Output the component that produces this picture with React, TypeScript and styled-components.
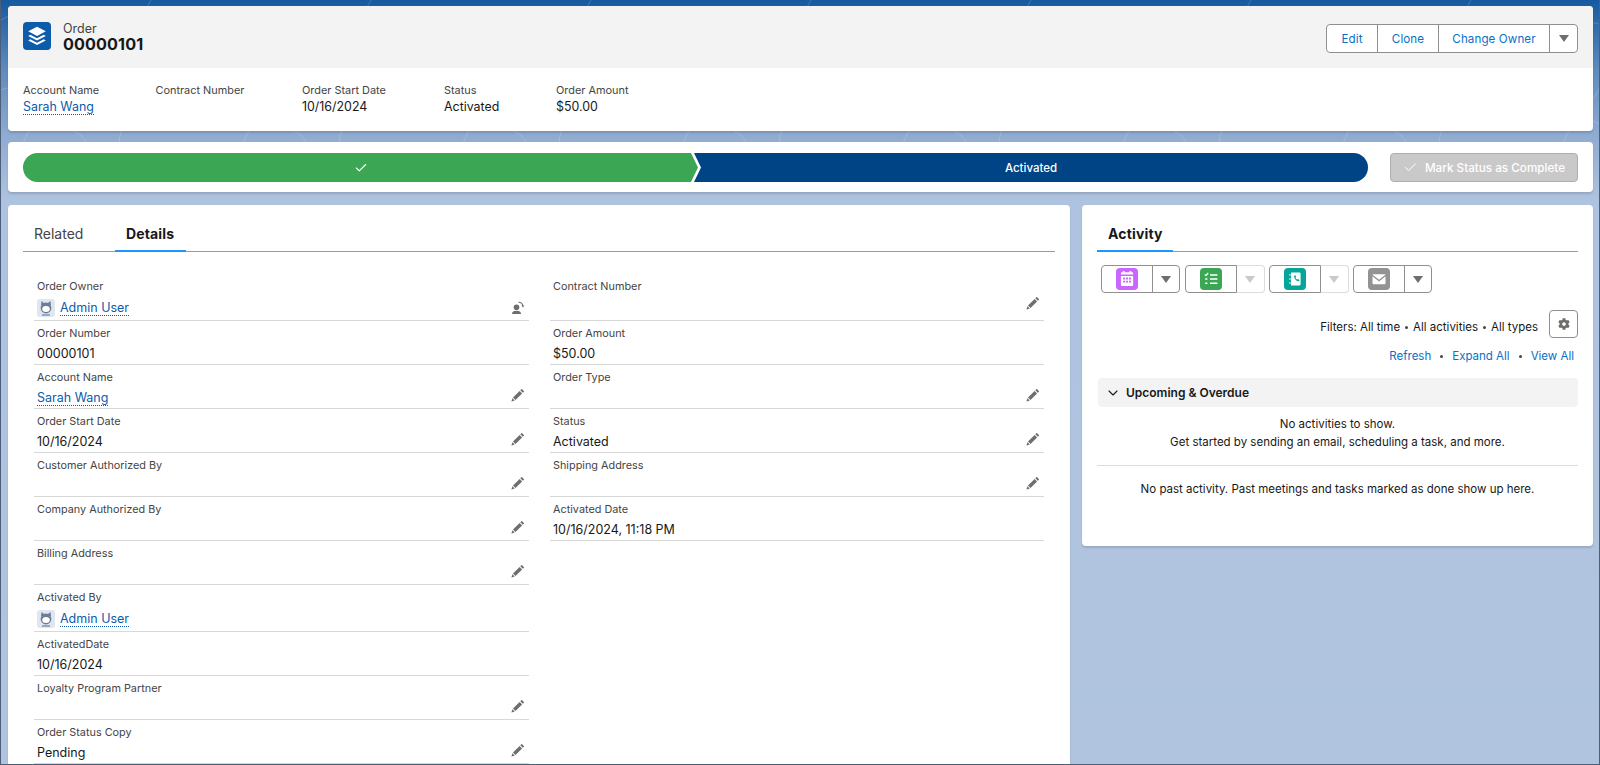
import React from "react";
import styled, { createGlobalStyle } from "styled-components";
import { Check, ChevronDown } from "lucide-react";
import { FaCog } from "react-icons/fa";

const contour = `<svg xmlns='http://www.w3.org/2000/svg' width='220' height='150' fill='none' stroke='white' stroke-opacity='.16' stroke-width='1'><path d='M0 20c30-18 50 14 80 2s40-20 70-6 40 10 70-4'/><path d='M20 150c10-40 50-50 40-90s40-40 60-30'/><path d='M120 150c-10-30 30-40 50-60s10-50 50-60'/><path d='M0 90c20-10 30 20 50 30s30 10 40 30'/><path d='M150 0c-10 20-30 30-20 50s30 20 40 40'/></svg>`;

const GlobalStyle = createGlobalStyle`
  html, body {
    margin: 0;
    padding: 0;
  }
  body {
    font-family: "Inter", "Liberation Sans", sans-serif;
    color: #181818;
    -webkit-font-smoothing: antialiased;
  }
`;

const Page = styled.div`
  box-sizing: border-box;
  width: 1600px;
  height: 765px;
  overflow: hidden;
  padding: 6px 6px 0 7px;
  display: flex;
  flex-direction: column;
  gap: 11px;
  border-left: 1px solid #4d5f78;
  border-right: 1px solid #4d5f78;
  border-bottom: 1px solid #4d5f78;
  background:
    url("data:image/svg+xml,${encodeURIComponent(contour)}") top left / 220px 150px repeat-x,
    linear-gradient(180deg, #17599f 0, #5f8bbd 70px, #8fabd0 135px, #aec3df 200px, #b0c4df 100%);
`;

const Card = styled.section`
  background: #fff;
  border-radius: 4px;
  box-shadow: 0 2px 2px rgba(24, 24, 24, 0.14);
`;

const HeaderCard = styled(Card)`
  height: 125px;
  flex: none;
  overflow: hidden;
`;

const HeaderTop = styled.div`
  height: 62px;
  box-sizing: border-box;
  padding: 16px 15px 0;
  background: #f3f3f3;
  display: flex;
  justify-content: space-between;
  align-items: flex-start;
`;

const TitleBlock = styled.div`
  display: flex;
  gap: 12px;
`;

const ObjectIcon = styled.div`
  width: 28px;
  height: 28px;
  border-radius: 4px;
  background: #0b5cab;
  display: flex;
  align-items: center;
  justify-content: center;
`;

const TitleText = styled.div`
  display: flex;
  flex-direction: column;
`;

const ObjectName = styled.div`
  font-size: 12.5px;
  line-height: 14px;
  color: #444;
`;

const RecordName = styled.div`
  font-size: 16.2px;
  line-height: 16px;
  font-weight: 700;
  letter-spacing: 0.1px;
`;

const ButtonGroup = styled.div`
  display: flex;
  height: 29px;
  margin-top: 2px;
  background: #fff;
  border: 1px solid #8f8f8f;
  border-radius: 4px;
  box-sizing: border-box;
`;

const GroupButton = styled.button<{ $w: number }>`
  width: ${({ $w }) => $w}px;
  padding: 0;
  background: none;
  border: none;
  border-left: 1px solid #8f8f8f;
  color: #0b6fc7;
  font: 400 11.6px "Inter", sans-serif;
  letter-spacing: 0.1px;
  display: flex;
  align-items: center;
  justify-content: center;
  &:first-child {
    border-left: none;
  }
`;

const Caret = styled.span<{ $light?: boolean }>`
  display: block;
  width: 0;
  height: 0;
  border-left: 5.5px solid transparent;
  border-right: 5.5px solid transparent;
  border-top: 7px solid ${({ $light }) => ($light ? "#c9c9c9" : "#706e6b")};
`;

const Highlights = styled.div`
  display: flex;
  padding: 13px 15px 0;
`;

const Highlight = styled.div<{ $w: number }>`
  width: ${({ $w }) => $w}px;
`;

const HighlightLabel = styled.div`
  font-size: 10.9px;
  line-height: 18px;
  color: #444;
`;

const HighlightValue = styled.div`
  font-size: 12.4px;
  line-height: 16px;
`;

const RecordLink = styled.a`
  color: #0b5cab;
  border-bottom: 1px dotted #0b5cab;
  text-decoration: none;
`;

const PathCard = styled(Card)`
  height: 50px;
  flex: none;
  box-sizing: border-box;
  padding: 11px 15px 0;
  display: flex;
  justify-content: space-between;
`;

const PathBar = styled.div`
  display: flex;
  width: 1345px;
  height: 29px;
`;

const PathDone = styled.div`
  width: 675px;
  margin-right: -7px;
  background: #3ba755;
  border-radius: 15px 0 0 15px;
  clip-path: polygon(0 0, 668px 0, 100% 50%, 668px 100%, 0 100%);
  color: #fff;
  display: flex;
  align-items: center;
  justify-content: center;
`;

const PathCurrent = styled.div`
  flex: 1;
  background: #014486;
  border-radius: 0 15px 15px 0;
  clip-path: polygon(0 0, 100% 0, 100% 100%, 0 100%, 7px 50%);
  margin-left: 3px;
  color: #fff;
  font-size: 11.5px;
  font-weight: 500;
  display: flex;
  align-items: center;
  justify-content: center;
`;

const CompleteButton = styled.button`
  width: 188px;
  height: 29px;
  padding: 0;
  background: #c9c9c9;
  border: 1px solid #aeaeae;
  border-radius: 4px;
  color: #fff;
  font: 500 11.7px "Inter", sans-serif;
  display: flex;
  align-items: center;
  justify-content: center;
  gap: 7px;
`;

const Columns = styled.div`
  flex: 1;
  min-height: 0;
  margin-top: 2px;
  display: grid;
  grid-template-columns: 1062px 511px;
  gap: 12px;
  align-items: start;
`;

const DetailCard = styled(Card)`
  height: 600px;
  box-sizing: border-box;
  padding: 0 15px;
`;

const ActivityCard = styled(Card)`
  height: 341px;
  box-sizing: border-box;
  padding: 0 15px;
`;

const Tabs = styled.div`
  height: 47px;
  box-sizing: border-box;
  display: flex;
  align-items: flex-end;
  border-bottom: 1px solid #9a9a9a;
`;

const Tab = styled.div<{ $active?: boolean; $w: number }>`
  width: ${({ $w }) => $w}px;
  box-sizing: border-box;
  height: 37px;
  margin-bottom: -1px;
  padding-left: 11px;
  font-size: 14px;
  line-height: 37px;
  font-weight: ${({ $active }) => ($active ? 700 : 400)};
  letter-spacing: ${({ $active }) => ($active ? "0.15px" : "0")};
  color: ${({ $active }) => ($active ? "#181818" : "#444")};
  border-bottom: 2px solid ${({ $active }) => ($active ? "#1b96ff" : "transparent")};
`;

const FieldGrid = styled.div`
  display: grid;
  grid-template-columns: 495px 494px;
  gap: 21px;
  padding: 22px 0 0 10.5px;
`;

const FieldColumn = styled.div`
  display: flex;
  flex-direction: column;
`;

const FieldRow = styled.div<{ $tall?: boolean }>`
  box-sizing: border-box;
  height: ${({ $tall }) => ($tall ? 47 : 44)}px;
  padding: 3px 4px 0 3.5px;
  border-bottom: 1px solid #d8d8d8;
`;

const FieldLabel = styled.div`
  font-size: 10.85px;
  line-height: 18px;
  color: #444;
`;

const FieldValue = styled.div<{ $tall?: boolean }>`
  height: ${({ $tall }) => ($tall ? 26 : 23)}px;
  display: flex;
  align-items: center;
  justify-content: space-between;
  font-size: 12.5px;
`;

const UserCell = styled.span`
  display: flex;
  align-items: center;
  gap: 5px;
`;

const RowAction = styled.span<{ $lift: number }>`
  display: flex;
  margin-top: ${({ $lift }) => $lift}px;
`;

const Avatar = styled.svg`
  width: 18px;
  height: 18px;
  border-radius: 3px;
`;

const ActionRow = styled.div`
  display: flex;
  gap: 4px;
  padding: 13px 0 0 3.5px;
`;

const ActionGroup = styled.div`
  display: flex;
  width: 80px;
  height: 28px;
`;

const ActionMain = styled.div`
  width: 52px;
  box-sizing: border-box;
  border: 1px solid #8f8f8f;
  border-radius: 4px 0 0 4px;
  display: flex;
  align-items: center;
  justify-content: center;
`;

const ActionCaret = styled.div<{ $disabled?: boolean }>`
  width: 28px;
  box-sizing: border-box;
  border: 1px solid ${({ $disabled }) => ($disabled ? "#dcdcdc" : "#8f8f8f")};
  border-left: ${({ $disabled }) => ($disabled ? "none" : "1px solid #8f8f8f")};
  margin-left: ${({ $disabled }) => ($disabled ? 0 : -1)}px;
  border-radius: 0 4px 4px 0;
  display: flex;
  align-items: center;
  justify-content: center;
`;

const ActionTile = styled.svg`
  width: 22px;
  height: 22px;
  border-radius: 4px;
`;

const FilterRow = styled.div`
  display: flex;
  justify-content: flex-end;
  align-items: center;
  gap: 11px;
  margin-top: 17px;
  font-size: 11.5px;
`;

const FilterText = styled.span`
  display: flex;
  align-items: center;
  gap: 5px;
  margin-top: 6px;
`;

const FilterDot = styled.span`
  width: 3px;
  height: 3px;
  border-radius: 50%;
  background: #444;
`;

const SettingsButton = styled.div`
  width: 29px;
  height: 28px;
  box-sizing: border-box;
  border: 1px solid #8f8f8f;
  border-radius: 4px;
  display: flex;
  align-items: center;
  justify-content: center;
  color: #706e6b;
`;

const LinkRow = styled.div`
  display: flex;
  justify-content: flex-end;
  align-items: center;
  gap: 7.5px;
  height: 18px;
  margin-top: 9px;
  padding-right: 4px;
  font-size: 11.5px;
`;

const ActionLink = styled.a`
  color: #0b6fc7;
`;

const Dot = styled.span`
  width: 3px;
  height: 3px;
  margin: 0 1.5px;
  border-radius: 50%;
  background: #444;
`;

const SectionBar = styled.div`
  height: 29px;
  margin: 13px 0 0 1px;
  padding-left: 7px;
  border-radius: 4px;
  background: #f3f3f3;
  display: flex;
  align-items: center;
  gap: 5px;
  font-size: 12px;
  font-weight: 600;
`;

const EmptyNote = styled.div`
  padding-top: 8px;
  text-align: center;
  font-size: 11.5px;
  line-height: 18px;
`;

const Divider = styled.div`
  height: 1px;
  margin-top: 14px;
  background: #dcdcdc;
`;

const PastNote = styled.div`
  padding-top: 14px;
  text-align: center;
  font-size: 11.5px;
  line-height: 18px;
`;

const Pencil = () => (
  <svg width="14" height="14" viewBox="0 0 14 14" fill="#706e6b">
    <path d="M10.3 1.2a.6.6 0 0 1 .85 0l1.7 1.7a.6.6 0 0 1 0 .85l-1 1-2.55-2.55zM8.6 2.9l2.5 2.5-6.6 6.6-2.5-2.5zM1.4 10.2l2.4 2.4-3.1.8a.2.2 0 0 1-.2-.2z" />
  </svg>
);

const ChangeOwner = () => (
  <svg width="14" height="14" viewBox="0 0 14 14" fill="#706e6b">
    <circle cx="5.5" cy="6.2" r="2.8" />
    <path d="M1 13c0-2.2 1.6-3.2 4.5-3.2S10 10.8 10 13z" />
    <path d="M7.5 1.2A4.6 4.6 0 0 1 12 5" fill="none" stroke="#706e6b" strokeWidth="1.1" />
    <path d="M10.4 4.6h3L11.9 6.6z" />
  </svg>
);

const UserAvatar = () => (
  <Avatar viewBox="0 0 18 18">
    <rect width="18" height="18" fill="#dfe6ef" />
    <path d="M4 6l.6-4 2.4 2h4l2.4-2 .6 4z" fill="#6f7d94" />
    <circle cx="9" cy="9" r="5.4" fill="#6f7d94" />
    <ellipse cx="9" cy="10" rx="3.8" ry="3" fill="#fff" />
    <path d="M5 15h8v2H5z" fill="#9aa8bc" />
  </Avatar>
);

const StackIcon = () => (
  <svg width="22" height="22" viewBox="0 0 20 20" fill="#fff">
    <path d="M10 1.5l8 4.2-8 4.2-8-4.2z" />
    <path d="M3.9 8.9L10 12l6.1-3.1 1.9 1-8 4.2-8-4.2z" />
    <path d="M3.9 13L10 16.1l6.1-3.1 1.9 1-8 4.2-8-4.2z" />
  </svg>
);

const EventTile = () => (
  <ActionTile viewBox="0 0 22 22">
    <rect width="22" height="22" fill="#cb65ff" />
    <g transform="translate(-2.4 -2.6) scale(1.22)">
      <path d="M6 7.5V6.6c0-.6.4-1 1-1h.6V4.6h1.3v1h4.2v-1h1.3v1h.6c.6 0 1 .4 1 1v.9z" fill="#fff" />
      <path d="M6 8.6h10v7.2c0 .6-.4 1-1 1H7c-.6 0-1-.4-1-1z" fill="#fff" />
      <path d="M7.8 10h1.6v1.5H7.8zm2.4 0h1.6v1.5h-1.6zm2.4 0h1.6v1.5h-1.6zm-4.8 2.6h1.6v1.5H7.8zm2.4 0h1.6v1.5h-1.6zm2.4 0h1.6v1.5h-1.6z" fill="#cb65ff" />
    </g>
  </ActionTile>
);

const TaskTile = () => (
  <ActionTile viewBox="0 0 22 22">
    <rect width="22" height="22" fill="#3ba755" />
    <path d="M4.8 6.4l1.2 1.2 2.2-2.6" fill="none" stroke="#fff" strokeWidth="1.2" />
    <path d="M10 6.2h7.4v1.5H10zM10 10.3h7.4v1.5H10zM10 14.4h7.4v1.5H10zM5.2 10.3h2.2v1.5H5.2zM5.2 14.4h2.2v1.5H5.2z" fill="#fff" />
  </ActionTile>
);

const CallTile = () => (
  <ActionTile viewBox="0 0 22 22">
    <rect width="22" height="22" fill="#06a59a" />
    <path d="M7 4.5h8.4c.7 0 1.2.5 1.2 1.2v10.6c0 .7-.5 1.2-1.2 1.2H7z" fill="#fff" />
    <path d="M5 7h1.8M5 11h1.8M5 15h1.8" stroke="#fff" strokeWidth="1.2" />
    <path d="M10.2 7.6l1.2-.4.8 1.8-.8.7c.3.8.9 1.5 1.7 1.9l.8-.7 1.6 1-.5 1.3c-2.7.3-5.3-2.7-4.8-5.6z" fill="#06a59a" />
  </ActionTile>
);

const MailTile = () => (
  <ActionTile viewBox="0 0 22 22">
    <rect width="22" height="22" fill="#939393" />
    <path d="M5 6.2h12c.4 0 .6.3.4.6L11 11.8 4.6 6.8c-.2-.3 0-.6.4-.6z" fill="#fff" />
    <path d="M4.5 8.3L11 13.4l6.5-5.1v7c0 .5-.4.9-.9.9H5.4c-.5 0-.9-.4-.9-.9z" fill="#fff" />
  </ActionTile>
);

interface Field {
  label: string;
  value?: string;
  link?: boolean;
  user?: boolean;
  action?: "edit" | "owner";
}

const leftFields: Field[] = [
  { label: "Order Owner", value: "Admin User", user: true, action: "owner" },
  { label: "Order Number", value: "00000101" },
  { label: "Account Name", value: "Sarah Wang", link: true, action: "edit" },
  { label: "Order Start Date", value: "10/16/2024", action: "edit" },
  { label: "Customer Authorized By", action: "edit" },
  { label: "Company Authorized By", action: "edit" },
  { label: "Billing Address", action: "edit" },
  { label: "Activated By", value: "Admin User", user: true },
  { label: "ActivatedDate", value: "10/16/2024" },
  { label: "Loyalty Program Partner", action: "edit" },
  { label: "Order Status Copy", value: "Pending", action: "edit" },
];

const rightFields: Field[] = [
  { label: "Contract Number", user: true, action: "edit" },
  { label: "Order Amount", value: "$50.00" },
  { label: "Order Type", action: "edit" },
  { label: "Status", value: "Activated", action: "edit" },
  { label: "Shipping Address", action: "edit" },
  { label: "Activated Date", value: "10/16/2024, 11:18 PM" },
];

const highlights = [
  { label: "Account Name", value: "Sarah Wang", link: true, width: 132.5 },
  { label: "Contract Number", value: "", width: 146.5 },
  { label: "Order Start Date", value: "10/16/2024", width: 142 },
  { label: "Status", value: "Activated", width: 112 },
  { label: "Order Amount", value: "$50.00", width: 100 },
];

function FieldItem({ field }: { field: Field }) {
  const lift = field.action === "owner" ? 0 : field.user ? -11 : -5;
  return (
    <FieldRow $tall={field.user}>
      <FieldLabel>{field.label}</FieldLabel>
      <FieldValue $tall={field.user}>
        {field.user && field.value ? (
          <UserCell>
            <UserAvatar />
            <RecordLink>{field.value}</RecordLink>
          </UserCell>
        ) : field.link ? (
          <RecordLink>{field.value}</RecordLink>
        ) : (
          <span>{field.value}</span>
        )}
        {field.action && (
          <RowAction $lift={lift}>{field.action === "edit" ? <Pencil /> : <ChangeOwner />}</RowAction>
        )}
      </FieldValue>
    </FieldRow>
  );
}

export default function App() {
  return (
    <Page>
      <GlobalStyle />
      <HeaderCard>
        <HeaderTop>
          <TitleBlock>
            <ObjectIcon>
              <StackIcon />
            </ObjectIcon>
            <TitleText>
              <ObjectName>Order</ObjectName>
              <RecordName>00000101</RecordName>
            </TitleText>
          </TitleBlock>
          <ButtonGroup>
            <GroupButton $w={50}>Edit</GroupButton>
            <GroupButton $w={61}>Clone</GroupButton>
            <GroupButton $w={111}>Change Owner</GroupButton>
            <GroupButton $w={28}>
              <Caret />
            </GroupButton>
          </ButtonGroup>
        </HeaderTop>
        <Highlights>
          {highlights.map((h) => (
            <Highlight key={h.label} $w={h.width}>
              <HighlightLabel>{h.label}</HighlightLabel>
              <HighlightValue>
                {h.link ? <RecordLink>{h.value}</RecordLink> : h.value}
              </HighlightValue>
            </Highlight>
          ))}
        </Highlights>
      </HeaderCard>

      <PathCard>
        <PathBar>
          <PathDone>
            <Check size={14} strokeWidth={2} />
          </PathDone>
          <PathCurrent>Activated</PathCurrent>
        </PathBar>
        <CompleteButton>
          <Check size={15} strokeWidth={1.6} />
          Mark Status as Complete
        </CompleteButton>
      </PathCard>

      <Columns>
        <DetailCard>
          <Tabs>
            <Tab $w={92}>Related</Tab>
            <Tab $active $w={71}>
              Details
            </Tab>
          </Tabs>
          <FieldGrid>
            <FieldColumn>
              {leftFields.map((f) => (
                <FieldItem key={f.label} field={f} />
              ))}
            </FieldColumn>
            <FieldColumn>
              {rightFields.map((f) => (
                <FieldItem key={f.label} field={f} />
              ))}
            </FieldColumn>
          </FieldGrid>
        </DetailCard>

        <ActivityCard>
          <Tabs>
            <Tab $active $w={76}>
              Activity
            </Tab>
          </Tabs>
          <ActionRow>
            <ActionGroup>
              <ActionMain>
                <EventTile />
              </ActionMain>
              <ActionCaret>
                <Caret />
              </ActionCaret>
            </ActionGroup>
            <ActionGroup>
              <ActionMain>
                <TaskTile />
              </ActionMain>
              <ActionCaret $disabled>
                <Caret $light />
              </ActionCaret>
            </ActionGroup>
            <ActionGroup>
              <ActionMain>
                <CallTile />
              </ActionMain>
              <ActionCaret $disabled>
                <Caret $light />
              </ActionCaret>
            </ActionGroup>
            <ActionGroup>
              <ActionMain>
                <MailTile />
              </ActionMain>
              <ActionCaret>
                <Caret />
              </ActionCaret>
            </ActionGroup>
          </ActionRow>
          <FilterRow>
            <FilterText>
              Filters: All time
              <FilterDot />
              All activities
              <FilterDot />
              All types
            </FilterText>
            <SettingsButton>
              <FaCog size={12} />
            </SettingsButton>
          </FilterRow>
          <LinkRow>
            <ActionLink>Refresh</ActionLink>
            <Dot />
            <ActionLink>Expand All</ActionLink>
            <Dot />
            <ActionLink>View All</ActionLink>
          </LinkRow>
          <SectionBar>
            <ChevronDown size={16} strokeWidth={1.6} />
            Upcoming &amp; Overdue
          </SectionBar>
          <EmptyNote>
            No activities to show.
            <br />
            Get started by sending an email, scheduling a task, and more.
          </EmptyNote>
          <Divider />
          <PastNote>No past activity. Past meetings and tasks marked as done show up here.</PastNote>
        </ActivityCard>
      </Columns>
    </Page>
  );
}
